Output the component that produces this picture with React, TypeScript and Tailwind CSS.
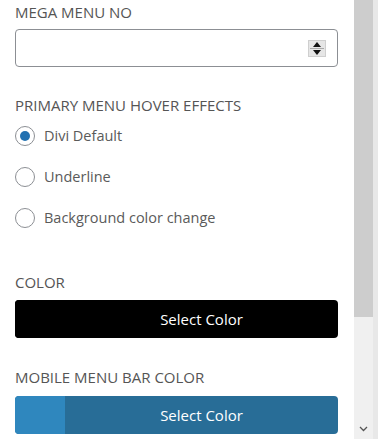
import React from 'react';

const font = { fontFamily: '"Open Sans", "Noto Sans", sans-serif' };

const Label: React.FC<{ text: string; className?: string }> = ({ text, className }) => (
  <div className={`text-[15px] leading-[20px] text-[#555] uppercase ${className ?? ''}`}>{text}</div>
);

const Radio: React.FC<{ label: string; checked?: boolean; className?: string }> = ({ label, checked, className }) => (
  <div className={`flex items-center gap-[9px] h-[20px] ${className ?? ''}`}>
    <span className="w-[20px] h-[20px] rounded-full border border-[#8c8f94] flex items-center justify-center bg-white">
      {checked && <span className="w-[10px] h-[10px] rounded-full bg-[#2271b1]" />}
    </span>
    <span className="text-[14.5px] text-[#5a5a5a]">{label}</span>
  </div>
);

const ColorButton: React.FC<{ swatch: string; main: string }> = ({ swatch, main }) => (
  <div className={`flex h-[38px] rounded-[4px] overflow-hidden ${main}`}>
    <div className={`w-[50px] ${swatch}`} />
    <div className="flex-1 flex items-center justify-center text-white text-[15px]">Select Color</div>
  </div>
);

const App: React.FC = () => {
  return (
    <div className="flex w-[378px] h-[439px] bg-white overflow-hidden" style={font}>
      <div className="flex-1 pl-[15px] pr-[16px]">
        <Label text="Mega Menu No" className="mt-[2px]" />
        <div className="mt-[7px] h-[38px] rounded-[4px] border border-[#8c8f94] flex items-center justify-end pr-[11px]">
          <div className="w-[18px] h-[17px] bg-[#e6e6e6] border border-[#cfcfcf] flex flex-col items-center justify-center gap-[1px]">
            <svg width="8" height="5" viewBox="0 0 8 5"><path d="M0 5 L4 0 L8 5 Z" fill="#111" /></svg>
            <div className="w-[14px] h-px bg-[#aaa]" />
            <svg width="8" height="5" viewBox="0 0 8 5"><path d="M0 0 L4 5 L8 0 Z" fill="#111" /></svg>
          </div>
        </div>
        <Label text="Primary Menu Hover Effects" className="mt-[28px]" />
        <Radio label="Divi Default" checked className="mt-[11px]" />
        <Radio label="Underline" className="mt-[21px]" />
        <Radio label="Background color change" className="mt-[21px]" />
        <Label text="Color" className="mt-[44px]" />
        <div className="mt-[8px]">
          <ColorButton swatch="bg-black" main="bg-black" />
        </div>
        <Label text="Mobile Menu Bar Color" className="mt-[29px]" />
        <div className="mt-[9px]">
          <ColorButton swatch="bg-[#2f87be]" main="bg-[#286d97]" />
        </div>
      </div>
      <div className="w-[24px] h-full flex">
        <div className="w-[19px] h-full flex flex-col bg-[#f0f0f0]">
          <div className="h-[317px] bg-[#cdcdcd]" />
          <div className="flex-1" />
          <div className="h-[20px] flex items-center justify-center">
            <svg width="9" height="6" viewBox="0 0 9 6"><path d="M1 1 L4.5 4.5 L8 1" stroke="#555" strokeWidth="1.3" fill="none" /></svg>
          </div>
        </div>
        <div className="flex-1 bg-[#e8e8e8]" />
      </div>
    </div>
  );
};

export default App;
